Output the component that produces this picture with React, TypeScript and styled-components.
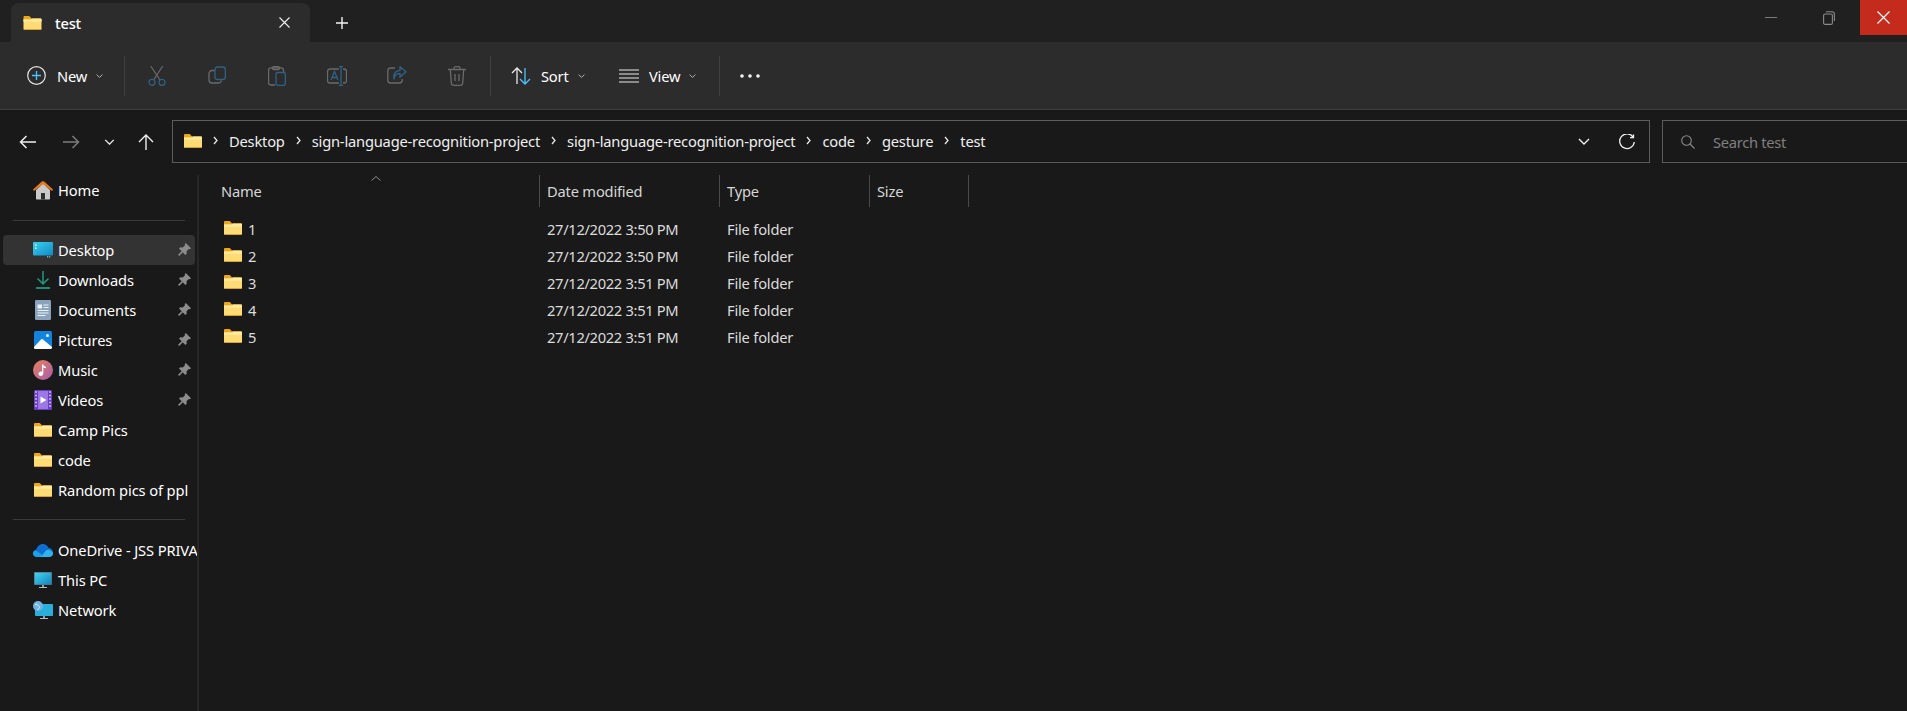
import React from "react";
import styled, {createGlobalStyle} from "styled-components";

const GlobalStyle = createGlobalStyle`
  html, body, #root {
    margin: 0;
    padding: 0;
    height: 100%;
    overflow: hidden;
    background: #191919;
  }
  body {
    font-family: "Noto Sans", "Open Sans", "Liberation Sans", sans-serif;
    font-size: 14.7px;
    letter-spacing: -0.2px;
    color: #fff;
  }
`

const Window = styled.div`
  width: 1907px;
  height: 711px;
  display: flex;
  flex-direction: column;
  overflow: hidden;
`

// title bar + tab
const TitleBar = styled.div`
  height: 42px;
  flex: none;
  display: flex;
  align-items: flex-start;
  padding-left: 11px;
  background: #202020;
`
const Tab = styled.div`
  width: 299px;
  height: 39px;
  margin-top: 3px;
  padding: 0 20px 0 12px;
  box-sizing: border-box;
  display: flex;
  align-items: center;
  gap: 13px;
  background: #2c2c2c;
  border-radius: 8px 8px 0 0;
`
const TabTitle = styled.span`
  flex: 1;
  font-weight: 500;
`
const NewTab = styled.div`
  width: 12px;
  height: 12px;
  margin: 17px 0 0 26px;
  display: flex;
`
const WindowButtons = styled.div`
  margin-left: auto;
  display: flex;
  height: 35px;
`
const WindowButton = styled.div<{$w: number; $danger?: boolean}>`
  width: ${p => p.$w}px;
  height: 35px;
  display: flex;
  align-items: center;
  justify-content: center;
  background: ${p => (p.$danger ? "#c42b1c" : "transparent")};
`

// command bar
const Toolbar = styled.div`
  height: 67px;
  flex: none;
  display: flex;
  align-items: center;
  padding-left: 27px;
  background: #2c2c2c;
  border-bottom: 1px solid #3f3f3f;
`
const LabelButton = styled.div<{$w: number; $ml?: number}>`
  width: ${p => p.$w}px;
  margin-left: ${p => p.$ml || 0}px;
  flex: none;
  display: flex;
  align-items: center;
  gap: 10px;
`
const Caret = styled.span`
  display: flex;
  margin-left: -1px;
`
const IconButton = styled.div`
  width: 60px;
  flex: none;
  display: flex;
  justify-content: center;
`
const ToolSep = styled.div<{$mr: number}>`
  width: 1px;
  height: 40px;
  flex: none;
  margin-right: ${p => p.$mr}px;
  background: #404040;
`
const IconRow = styled.div`
  display: flex;
  margin-right: 3px;
`
const MoreButton = styled.div`
  margin-left: 20px;
  display: flex;
`

// nav row
const NavBar = styled.div`
  height: 65px;
  flex: none;
  display: flex;
  align-items: flex-start;
  padding: 10px 0 0 5px;
  box-sizing: border-box;
`
const NavButton = styled.div<{$w: number}>`
  width: ${p => p.$w}px;
  height: 43px;
  flex: none;
  display: flex;
  align-items: center;
  justify-content: center;
`
const AddressBox = styled.div`
  width: 1478px;
  height: 43px;
  margin-left: 5px;
  flex: none;
  box-sizing: border-box;
  display: flex;
  align-items: center;
  padding: 0 14px 0 11px;
  border: 1px solid #5c5c5c;
`
const Crumbs = styled.div`
  display: flex;
  align-items: center;
  gap: 11px;
  margin-bottom: 2px;
  color: #f0f0f0;
`
const AddressTools = styled.div`
  margin-left: auto;
  display: flex;
  align-items: center;
  gap: 29px;
`
const SearchBox = styled.div`
  width: 300px;
  height: 43px;
  margin-left: 12px;
  flex: none;
  box-sizing: border-box;
  display: flex;
  align-items: center;
  gap: 18px;
  padding-left: 18px;
  border: 1px solid #5c5c5c;
  color: #808080;
  letter-spacing: -0.3px;
`

// body
const Body = styled.div`
  flex: 1;
  display: flex;
  min-height: 0;
`
const Sidebar = styled.div`
  width: 197px;
  flex: none;
  padding: 0 2px 0 3px;
  box-sizing: border-box;
  overflow: hidden;
  letter-spacing: -0.12px;
`
const SidebarEdge = styled.div`
  width: 2px;
  flex: none;
  background: #272727;
`
const NavRow = styled.div<{$active?: boolean}>`
  height: 30px;
  display: flex;
  align-items: center;
  padding-left: 30px;
  border-radius: 4px;
  background: ${p => (p.$active ? "#333333" : "transparent")};
  position: relative;
  white-space: nowrap;
`
const NavIcon = styled.span`
  width: 20px;
  height: 20px;
  flex: none;
  display: flex;
  align-items: center;
  justify-content: center;
  margin-right: 5px;
`
const PinSlot = styled.span`
  position: absolute;
  right: 4px;
  top: 8px;
  display: flex;
`
const NavDivider = styled.div<{$low?: boolean}>`
  height: 1px;
  margin: ${p => (p.$low ? "14px 10px 15px" : "15px 10px 14px")};
  background: #3a3a3a;
`

const Files = styled.div`
  flex: 1;
  position: relative;
`
const columns = "340px 180px 150px 100px"
const HeaderRow = styled.div`
  display: grid;
  grid-template-columns: ${columns};
  height: 32px;
  margin-bottom: 8px;
`
const HeaderCell = styled.div<{$first?: boolean; $last?: boolean}>`
  display: flex;
  align-items: center;
  padding-left: ${p => (p.$first ? 22 : 7)}px;
  color: #d6d6d6;
  border-left: ${p => (p.$first ? "0" : "1px solid #4a4a4a")};
  border-right: ${p => (p.$last ? "1px solid #4a4a4a" : "0")};
`
const SortArrow = styled.div`
  position: absolute;
  left: 172px;
  top: 1px;
  display: flex;
`
const FileRow = styled.div`
  display: grid;
  grid-template-columns: ${columns};
  height: 27px;
  align-items: center;
  color: #dcdcdc;
`
const NameCell = styled.div`
  display: flex;
  align-items: center;
  gap: 6px;
  padding-left: 25px;
  svg {
    margin-top: -2px;
  }
`
const Cell = styled.div`
  padding-left: 8px;
`
const DateCell = styled(Cell)`
  letter-spacing: -0.32px;
`

const Chevron = ({size = 5, color = "#e8e8e8"}: {size?: number; color?: string}) => (
    <svg width={size} height={9} viewBox="0 0 5 9" fill="none" stroke={color} strokeWidth="1.3">
        <path d="M1 1l3 3.5L1 8"/>
    </svg>
)
const Down = ({w = 7, h = 4, color = "#b8b8b8", sw = 1}: {w?: number; h?: number; color?: string; sw?: number}) => (
    <svg width={w} height={h} viewBox="0 0 12 7" fill="none" stroke={color} strokeWidth={sw * 12 / w}>
        <path d="M1 1l5 5 5-5"/>
    </svg>
)

const Folder = ({w = 18, h = 14}: {w?: number; h?: number}) => (
    <svg width={w} height={h} viewBox="0 0 18 14">
        <path d="M0 1.2C0 .5.5 0 1.2 0h4.600l2 2.200h9C17.500 2.200 18 2.700 18 3.400V5H0z" fill="#eda51c"/>
        <path d="M0 3.600h7.800L9.200 2.800H17c.6 0 1 .4 1 1v9c0 .7-.5 1.200-1.200 1.200H1.200C.5 14 0 13.500 0 12.800z" fill="#fedb74"/>
        <path d="M0 3.600h7.800L9.200 2.800H17c.6 0 1 .4 1 1v2H0z" fill="#ffeaa0"/>
        <path d="M0 13h18v-.2c0 .7-.5 1.200-1.200 1.200H1.200C.5 14 0 13.500 0 12.800z" fill="#d9a132"/>
    </svg>
)

const dim = "#6a6a6a"
const dimBlue = "#2f6285"

const CutIcon = () => (
    <svg width="18" height="20" viewBox="0 0 18 20" fill="none" strokeWidth="1.2">
        <path d="M2.700 0l9.300 14M14.700 0L5.500 14" stroke={dim}/>
        <circle cx="4" cy="16.300" r="3" stroke={dimBlue}/>
        <circle cx="14" cy="16.300" r="3" stroke={dimBlue}/>
    </svg>
)
const CopyIcon = () => (
    <svg width="18" height="18" viewBox="0 0 18 18" fill="none" strokeWidth="1.3">
        <rect x="7" y="1" width="10.300" height="12.500" rx="2.500" stroke={dimBlue}/>
        <path d="M6.500 4.500H4a3 3 0 0 0-3 3V14a3 3 0 0 0 3 3h6.500a3 3 0 0 0 3-2.500" stroke={dim}/>
    </svg>
)
const PasteIcon = () => (
    <svg width="18" height="20" viewBox="0 0 18 20" fill="none" strokeWidth="1.3">
        <path d="M7 19H3a2.500 2.500 0 0 1-2.500-2.500V4A2.500 2.500 0 0 1 3 1.800h10A2.500 2.500 0 0 1 15.500 4v2" stroke={dim}/>
        <rect x="4.500" y=".7" width="7" height="2.800" rx="1.200" stroke={dim}/>
        <rect x="8" y="6.500" width="9.300" height="12.800" rx="2" stroke={dimBlue}/>
    </svg>
)
const RenameIcon = () => (
    <svg width="20" height="20" viewBox="0 0 20 20" fill="none" strokeWidth="1.3">
        <path d="M12 3H3a2.500 2.500 0 0 0-2.500 2.500v9A2.500 2.500 0 0 0 3 17h9M16 3h1a2.500 2.500 0 0 1 2.500 2.500v9A2.500 2.500 0 0 1 17 17h-1" stroke={dim}/>
        <path d="M4 14L7.500 5.500 11 14M5.200 11.500h4.600M14 .7v18.600M12 .7h4M12 19.300h4" stroke={dimBlue}/>
    </svg>
)
const ShareIcon = () => (
    <svg width="20" height="18" viewBox="0 0 20 18" fill="none" strokeWidth="1.3">
        <path d="M8 2H3.500A2.700 2.700 0 0 0 .8 4.700v9.600A2.700 2.700 0 0 0 3.500 17h9a2.700 2.700 0 0 0 2.700-2.700V13" stroke={dim}/>
        <path d="M7 13.500C7 9.500 9.500 7.500 13 7.500V11l6-5.200L13 .8v3.500C8.500 4.500 6 8 7 13.500z" stroke={dimBlue}/>
    </svg>
)
const TrashIcon = () => (
    <svg width="18" height="20" viewBox="0 0 18 20" fill="none" stroke={dim} strokeWidth="1.3">
        <path d="M0 3.500h18M6 3.500V2.200C6 1.300 6.700.7 7.500.7h3c.9 0 1.500.6 1.500 1.500v1.300M2.300 3.500l1 13.500c.1 1.300 1 2.300 2.300 2.300h6.800c1.300 0 2.200-1 2.300-2.300l1-13.500M7 8v7M11 8v7"/>
    </svg>
)
const NewIcon = () => (
    <svg width="20" height="19" viewBox="0 0 20 19" fill="none">
        <circle cx="9.500" cy="9.500" r="8.800" stroke="#e4e4e4" strokeWidth="1.200"/>
        <path d="M9.500 5v9M5 9.500h9" stroke="#4cc2ff" strokeWidth="1.300"/>
    </svg>
)
const SortIcon = () => (
    <svg width="20" height="18" viewBox="0 0 20 18" fill="none" strokeWidth="1.300">
        <path d="M6 17V1M1 6l5-5 5 5" stroke="#e8e8e8"/>
        <path d="M14 1v16M9 12l5 5 5-5" stroke="#4cc2ff"/>
    </svg>
)
const ViewIcon = () => (
    <svg width="20" height="14" viewBox="0 0 20 14" fill="none" stroke="#e8e8e8" strokeWidth="1.200">
        <path d="M0 1h20M0 5h20M0 9h20M0 13h20"/>
    </svg>
)
const DotsIcon = () => (
    <svg width="20" height="4" viewBox="0 0 20 4" fill="#f4f4f4">
        <circle cx="2" cy="2" r="1.800"/>
        <circle cx="10" cy="2" r="1.800"/>
        <circle cx="18" cy="2" r="1.800"/>
    </svg>
)
const ArrowLeft = ({color}: {color: string}) => (
    <svg width="17" height="14" viewBox="0 0 17 14" fill="none" stroke={color} strokeWidth="1.500">
        <path d="M17 7H1.500M7.500 1L1.500 7l6 6"/>
    </svg>
)
const ArrowRight = ({color}: {color: string}) => (
    <svg width="17" height="14" viewBox="0 0 17 14" fill="none" stroke={color} strokeWidth="1.500">
        <path d="M0 7h15.500M9.500 1l6 6-6 6"/>
    </svg>
)
const ArrowUp = () => (
    <svg width="16" height="16" viewBox="0 0 16 16" fill="none" stroke="#f0f0f0" strokeWidth="1.400">
        <path d="M8 16V1M1 8l7-7 7 7"/>
    </svg>
)
const RefreshIcon = () => (
    <svg width="16" height="16" viewBox="0 0 16 16" fill="none" stroke="#f0f0f0" strokeWidth="1.300">
        <path d="M14 3A7.300 7.300 0 1 0 15.300 8"/>
        <path d="M14.500.5v3.200h-3.500"/>
    </svg>
)
const SearchIcon = () => (
    <svg width="14" height="14" viewBox="0 0 14 14" fill="none" stroke="#8a8a8a" strokeWidth="1.100">
        <circle cx="5.500" cy="5.500" r="4.800"/>
        <path d="M9 9l4.500 4.500"/>
    </svg>
)
const PinIcon = () => (
    <svg width="13" height="13" viewBox="0 0 13 13" fill="#8c8c8c">
        <path d="M7.800 0L13 5.200l-1.200 1.100-1-.3L8.500 8.300l.2 2.400-1.300 1.300L1 5.600l1.300-1.300 2.400.2L7 2.200l-.3-1z"/>
        <path d="M4.400 8.600L.6 12.400" stroke="#8c8c8c" strokeWidth="1.500" fill="none"/>
    </svg>
)

const HomeIcon = () => (
    <svg width="20" height="19" viewBox="0 0 20 19">
        <path d="M3 9l7-6.500L17 9v8.500c0 .6-.4 1-1 1H4c-.6 0-1-.4-1-1z" fill="#c9c9c9"/>
        <path d="M8 12h4v6.500H8z" fill="#2f2f2f"/>
        <path d="M0 8.500L8.800.6c.7-.6 1.700-.6 2.400 0L20 8.500l-1 1.500L10 3 1 10z" fill="#e8791c"/>
    </svg>
)
const DesktopIcon = () => (
    <svg width="20" height="16" viewBox="0 0 20 16">
        <defs>
            <linearGradient id="desk" x1="0" y1="0" x2="1" y2="1">
                <stop offset="0" stopColor="#3bd0ee"/>
                <stop offset="1" stopColor="#0f8ac4"/>
            </linearGradient>
        </defs>
        <rect width="20" height="13.500" rx="1" fill="url(#desk)"/>
        <rect x="2" y="2.500" width="1.500" height="1.500" fill="#e4faff"/>
        <rect x="2" y="5.500" width="1.500" height="1.500" fill="#e4faff"/>
        <rect x="14" y="14" width="1.200" height="1.500" fill="#7fa8b8"/>
        <rect x="16" y="14" width="1.200" height="1.500" fill="#7fa8b8"/>
    </svg>
)
const DownloadIcon = () => (
    <svg width="14" height="18" viewBox="0 0 14 18" fill="none" stroke="#1f9a7e" strokeWidth="1.500">
        <path d="M7 0v12.500M1.500 7.500L7 13l5.500-5.500"/>
        <path d="M0 17h14" strokeWidth="1.800"/>
    </svg>
)
const DocumentIcon = () => (
    <svg width="16" height="20" viewBox="0 0 16 20">
        <rect width="16" height="20" rx="1.200" fill="#8aa3bd"/>
        <rect x="2.500" y="4.500" width="4.500" height="4" fill="#eef3f8"/>
        <path d="M8.500 5h5M8.500 7.500h5M2.500 10.500h11M2.500 13h11M2.500 15.500h8" stroke="#eef3f8" strokeWidth="1"/>
    </svg>
)
const PicturesIcon = () => (
    <svg width="18" height="18" viewBox="0 0 18 18">
        <rect width="18" height="18" rx="1.500" fill="#1184e0"/>
        <circle cx="13.500" cy="4.500" r="1.500" fill="#e6f4ff"/>
        <path d="M0 16l7-7.500c.7-.6 1.400-.6 2 0l9 7.500v.5c0 .8-.7 1.500-1.500 1.500h-15C.7 18 0 17.300 0 16.500z" fill="#fff"/>
    </svg>
)
const MusicIcon = () => (
    <svg width="20" height="20" viewBox="0 0 20 20">
        <defs>
            <linearGradient id="mus" x1="0" y1="0" x2="1" y2="1">
                <stop offset="0" stopColor="#e9805a"/>
                <stop offset="1" stopColor="#a85cae"/>
            </linearGradient>
        </defs>
        <circle cx="10" cy="10" r="10" fill="url(#mus)"/>
        <path d="M9 4.500h1.300c.2 1.400 1.200 2 2.700 2.300v1.500c-1.200-.1-2-.5-2.700-1.100v6.300c0 1.400-1.100 2.500-2.400 2.500S5.500 15 5.500 13.700s1.100-2.300 2.400-2.300c.4 0 .8.100 1.100.3z" fill="#fff"/>
    </svg>
)
const VideoIcon = () => (
    <svg width="18" height="20" viewBox="0 0 18 20">
        <rect width="18" height="20" rx="1.500" fill="#6b3fc4"/>
        <rect x="4" y="1" width="10" height="18" fill="#9b78e6"/>
        <path d="M1 2h2M1 5.500h2M1 9h2M1 12.500h2M1 16h2M15 2h2M15 5.500h2M15 9h2M15 12.500h2M15 16h2" stroke="#c7b4f2" strokeWidth="1.500"/>
        <path d="M6.500 6.500l6 3.500-6 3.500z" fill="#fff"/>
    </svg>
)
const CloudIcon = () => (
    <svg width="20" height="13" viewBox="0 0 20 13">
        <path d="M4 13C1.800 13 0 11.500 0 9.400 0 7.400 1.500 6 3.300 5.800 4 2.500 6.700 0 9.800 0c2.600 0 4.700 1.500 5.600 3.800 2.600.1 4.600 2.100 4.600 4.700 0 2.500-2 4.500-4.500 4.500z" fill="#0f6fd0"/>
        <path d="M4 13C1.800 13 0 11.500 0 9.400c0-1.500 1-2.700 2.500-3.200l10 6.800z" fill="#1ba0ea"/>
        <path d="M8 13l4.500-6c1-1.200 2.500-1.500 4-1 1.500.5 3.500 1.700 3.500 3.500 0 2-1.500 3.500-4.500 3.500z" fill="#2fb4f0"/>
    </svg>
)
const MonitorIcon = ({w = 18, h = 16}: {w?: number; h?: number}) => (
    <svg width={w} height={h} viewBox="0 0 18 16">
        <defs>
            <linearGradient id="mon" x1="0" y1="0" x2="1" y2="1">
                <stop offset="0" stopColor="#46d4ee"/>
                <stop offset="1" stopColor="#0f84c0"/>
            </linearGradient>
        </defs>
        <rect width="18" height="13" rx=".7" fill="#5a6c78"/>
        <rect x=".7" y=".7" width="16.600" height="11.600" fill="url(#mon)"/>
        <rect x="8" y="13" width="2" height="2" fill="#8fa0aa"/>
        <rect x="5" y="15" width="8" height="1" fill="#b4bec4"/>
    </svg>
)
const NetworkIcon = () => (
    <svg width="20" height="18" viewBox="0 0 20 18">
        <rect x="2" y="3" width="18" height="12" rx=".7" fill="#2aaedb"/>
        <rect x="10" y="15" width="2" height="2" fill="#8fa0aa"/>
        <rect x="7" y="17" width="8" height="1" fill="#b4bec4"/>
        <circle cx="5" cy="5" r="5" fill="#6fb2e4"/>
        <path d="M2 3.500c1.500-.8 2.500 0 3 1s1.800.7 1.500 2-1.500 1-2 2.500" stroke="#e4f2fc" strokeWidth="1" fill="none"/>
    </svg>
)

const pinned: [string, React.ReactNode, boolean?][] = [
    ["Desktop", <DesktopIcon/>, true],
    ["Downloads", <DownloadIcon/>],
    ["Documents", <DocumentIcon/>],
    ["Pictures", <PicturesIcon/>],
    ["Music", <MusicIcon/>],
    ["Videos", <VideoIcon/>],
]
const quickFolders = ["Camp Pics", "code", "Random pics of ppl"]
const crumbs = ["Desktop", "sign-language-recognition-project", "sign-language-recognition-project", "code", "gesture", "test"]
const files: [string, string][] = [
    ["1", "27/12/2022 3:50 PM"],
    ["2", "27/12/2022 3:50 PM"],
    ["3", "27/12/2022 3:51 PM"],
    ["4", "27/12/2022 3:51 PM"],
    ["5", "27/12/2022 3:51 PM"],
]

const App = () => {
    return (
        <Window>
            <GlobalStyle/>
            <TitleBar>
                <Tab>
                    <Folder w={19} h={14}/>
                    <TabTitle>test</TabTitle>
                    <svg width="11" height="11" viewBox="0 0 11 11" stroke="#f0f0f0" strokeWidth="1.100">
                        <path d="M.5.5l10 10M10.500.5l-10 10"/>
                    </svg>
                </Tab>
                <NewTab>
                    <svg width="12" height="12" viewBox="0 0 12 12" stroke="#f4f4f4" strokeWidth="1.400">
                        <path d="M6 0v12M0 6h12"/>
                    </svg>
                </NewTab>
                <WindowButtons>
                    <WindowButton $w={54}>
                        <svg width="12" height="1" viewBox="0 0 12 1"><path d="M0 0h12v1H0z" fill="#7a7a7a"/></svg>
                    </WindowButton>
                    <WindowButton $w={62}>
                        <svg width="12" height="14" viewBox="0 0 12 14" fill="none" stroke="#8a8a8a" strokeWidth="1.100">
                            <rect x=".6" y="3" width="8.800" height="10.400" rx="1.500"/>
                            <path d="M3 .7h6c1.500 0 2.400 1 2.400 2.400v7"/>
                        </svg>
                    </WindowButton>
                    <WindowButton $w={47} $danger>
                        <svg width="13" height="13" viewBox="0 0 13 13" stroke="#fff" strokeWidth="1.200">
                            <path d="M.5.5l12 12M12.500.5l-12 12"/>
                        </svg>
                    </WindowButton>
                </WindowButtons>
            </TitleBar>

            <Toolbar>
                <LabelButton $w={97}>
                    <NewIcon/>New<Caret><Down/></Caret>
                </LabelButton>
                <ToolSep $mr={2}/>
                <IconRow>
                    <IconButton><CutIcon/></IconButton>
                    <IconButton><CopyIcon/></IconButton>
                    <IconButton><PasteIcon/></IconButton>
                    <IconButton><RenameIcon/></IconButton>
                    <IconButton><ShareIcon/></IconButton>
                    <IconButton><TrashIcon/></IconButton>
                </IconRow>
                <ToolSep $mr={0}/>
                <LabelButton $w={108} $ml={20}>
                    <SortIcon/>Sort<Caret><Down/></Caret>
                </LabelButton>
                <LabelButton $w={100}>
                    <ViewIcon/>View<Caret><Down/></Caret>
                </LabelButton>
                <ToolSep $mr={0}/>
                <MoreButton><DotsIcon/></MoreButton>
            </Toolbar>

            <NavBar>
                <NavButton $w={44}><ArrowLeft color="#f0f0f0"/></NavButton>
                <NavButton $w={45}><ArrowRight color="#7c7c7c"/></NavButton>
                <NavButton $w={31}><Down w={11} h={6} color="#f0f0f0" sw={1.4}/></NavButton>
                <NavButton $w={42}><ArrowUp/></NavButton>
                <AddressBox>
                    <Crumbs>
                        <Folder w={18} h={14}/>
                        {crumbs.map((c, i) => (
                            <React.Fragment key={i}>
                                <Chevron/>
                                <span>{c}</span>
                            </React.Fragment>
                        ))}
                    </Crumbs>
                    <AddressTools>
                        <Down w={12} h={7} color="#f0f0f0" sw={1.4}/>
                        <RefreshIcon/>
                    </AddressTools>
                </AddressBox>
                <SearchBox>
                    <SearchIcon/>
                    <span>Search test</span>
                </SearchBox>
            </NavBar>

            <Body>
                <Sidebar>
                    <NavRow><NavIcon><HomeIcon/></NavIcon>Home</NavRow>
                    <NavDivider/>
                    {pinned.map(([name, icon, active]) => (
                        <NavRow key={name} $active={active}>
                            <NavIcon>{icon}</NavIcon>
                            {name}
                            <PinSlot><PinIcon/></PinSlot>
                        </NavRow>
                    ))}
                    {quickFolders.map(name => (
                        <NavRow key={name}><NavIcon><Folder w={18} h={14}/></NavIcon>{name}</NavRow>
                    ))}
                    <NavDivider $low/>
                    <NavRow><NavIcon><CloudIcon/></NavIcon>OneDrive - JSS PRIVA</NavRow>
                    <NavRow><NavIcon><MonitorIcon/></NavIcon>This PC</NavRow>
                    <NavRow><NavIcon><NetworkIcon/></NavIcon>Network</NavRow>
                </Sidebar>
                <SidebarEdge/>
                <Files>
                    <SortArrow>
                        <svg width="10" height="5" viewBox="0 0 10 5" fill="none" stroke="#9a9a9a" strokeWidth=".9">
                            <path d="M.5 4.500L5 .5l4.500 4"/>
                        </svg>
                    </SortArrow>
                    <HeaderRow>
                        <HeaderCell $first>Name</HeaderCell>
                        <HeaderCell>Date modified</HeaderCell>
                        <HeaderCell>Type</HeaderCell>
                        <HeaderCell $last>Size</HeaderCell>
                    </HeaderRow>
                    {files.map(([name, date]) => (
                        <FileRow key={name}>
                            <NameCell><Folder w={18} h={14}/>{name}</NameCell>
                            <DateCell>{date}</DateCell>
                            <Cell>File folder</Cell>
                        </FileRow>
                    ))}
                </Files>
            </Body>
        </Window>
    )
}

export default App
